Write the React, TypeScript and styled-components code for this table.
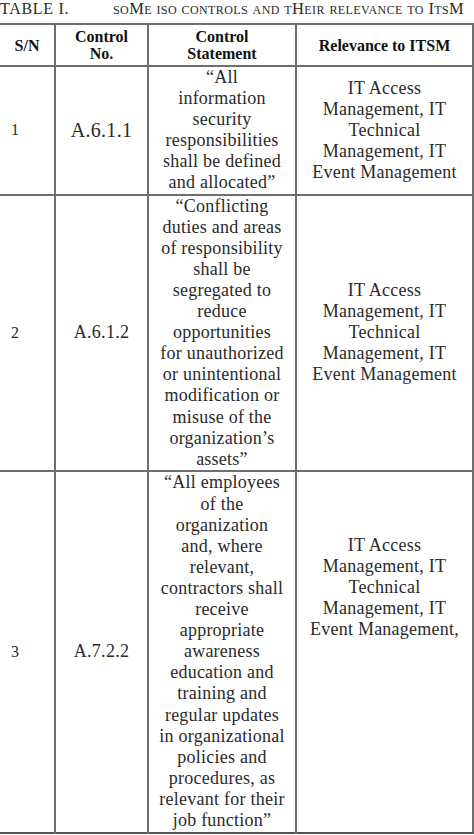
import styled, { createGlobalStyle } from 'styled-components';

const GlobalStyle = createGlobalStyle`
  html, body {
    margin: 0;
    padding: 0;
    background: #fff;
  }
  body {
    font-family: "Liberation Serif", "Times New Roman", serif;
    color: #2a2a2a;
  }
`;

type Row = {
  sn: string;
  control: string;
  controlSize: number;
  statement: string[];
  relevance: string[];
  relevancePad?: number;
  height: number;
};

const relevanceLines = ['IT Access', 'Management, IT', 'Technical', 'Management, IT', 'Event Management'];

const rows: Row[] = [
  {
    sn: '1',
    control: 'A.6.1.1',
    controlSize: 20,
    statement: ['“All', 'information', 'security', 'responsibilities', 'shall be defined', 'and allocated”'],
    relevance: relevanceLines,
    height: 127,
  },
  {
    sn: '2',
    control: 'A.6.1.2',
    controlSize: 18,
    statement: [
      '“Conflicting',
      'duties and areas',
      'of responsibility',
      'shall be',
      'segregated to',
      'reduce',
      'opportunities',
      'for unauthorized',
      'or unintentional',
      'modification or',
      'misuse of the',
      'organization’s',
      'assets”',
    ],
    relevance: relevanceLines,
    height: 275,
  },
  {
    sn: '3',
    control: 'A.7.2.2',
    controlSize: 18,
    statement: [
      '“All employees',
      'of the',
      'organization',
      'and, where',
      'relevant,',
      'contractors shall',
      'receive',
      'appropriate',
      'awareness',
      'education and',
      'training and',
      'regular updates',
      'in organizational',
      'policies and',
      'procedures, as',
      'relevant for their',
      'job function”',
    ],
    relevance: [...relevanceLines.slice(0, 4), 'Event Management,'],
    relevancePad: 128,
    height: 362,
  },
];

export default function App() {
  return (
    <>
      <GlobalStyle />
      <Page>
        <Caption>
          <CaptionLabel>TABLE I.</CaptionLabel>
          <CaptionTitle>soMe iso controls and tHeir relevance to ItsM</CaptionTitle>
        </Caption>
        <Table>
          <colgroup>
            <col style={{ width: 55 }} />
            <col style={{ width: 93 }} />
            <col style={{ width: 148 }} />
            <col />
          </colgroup>
          <thead>
            <tr>
              <HeadCell $first>S/N</HeadCell>
              <HeadCell>
                Control
                <br />
                No.
              </HeadCell>
              <HeadCell>
                Control
                <br />
                Statement
              </HeadCell>
              <HeadCell>Relevance to ITSM</HeadCell>
            </tr>
          </thead>
          <tbody>
            {rows.map(row => (
              <BodyRow key={row.sn} $height={row.height}>
                <SnCell>{row.sn}</SnCell>
                <ControlCell $size={row.controlSize}>{row.control}</ControlCell>
                <TextCell>
                  {row.statement.map((line, i) => (
                    <Line key={i}>{line}</Line>
                  ))}
                </TextCell>
                <TextCell $padBottom={row.relevancePad}>
                  {row.relevance.map((line, i) => (
                    <Line key={i}>{line}</Line>
                  ))}
                </TextCell>
              </BodyRow>
            ))}
          </tbody>
        </Table>
      </Page>
    </>
  );
}

const Page = styled.div`
  width: 474px;
  height: 835px;
  overflow: hidden;
  background: #fff;
`;

const Caption = styled.div`
  display: flex;
  align-items: baseline;
  height: 23px;
  line-height: 18px;
  color: #2a2a2a;
`;

const CaptionLabel = styled.span`
  width: 113px;
  font-size: 16px;
  letter-spacing: 0.7px;
`;

const CaptionTitle = styled.span`
  font-size: 16.5px;
  font-variant: small-caps;
  letter-spacing: 0.4px;
  white-space: nowrap;
`;

const Table = styled.table`
  width: 474px;
  table-layout: fixed;
  border-collapse: collapse;
  border-top: 2px solid #6e6e6e;
  border-bottom: 2px solid #555;
  border-right: 2px solid #6e6e6e;
`;

const HeadCell = styled.th<{ $first?: boolean }>`
  height: 40px;
  padding: 0;
  font-size: 16px;
  line-height: 17px;
  font-weight: bold;
  color: #111;
  text-align: center;
  vertical-align: middle;
  border-bottom: 2px solid #6e6e6e;
  border-left: ${({ $first }) => ($first ? 'none' : '2px solid #6e6e6e')};
`;

const BodyRow = styled.tr<{ $height: number }>`
  height: ${({ $height }) => `${$height}px`};

  td {
    border-top: 2px solid #6e6e6e;
  }
`;

const SnCell = styled.td`
  padding: 0 0 0 11px;
  font-size: 16px;
  vertical-align: middle;
  text-align: left;
`;

const ControlCell = styled.td<{ $size: number }>`
  padding: 0;
  font-size: ${({ $size }) => `${$size}px`};
  letter-spacing: 0.3px;
  text-align: center;
  vertical-align: middle;
  border-left: 2px solid #6e6e6e;
`;

const TextCell = styled.td<{ $padBottom?: number }>`
  padding: 0 0 ${({ $padBottom }) => `${$padBottom ?? 0}px`};
  font-size: 18px;
  line-height: 21.1px;
  letter-spacing: 0.25px;
  text-align: center;
  vertical-align: middle;
  border-left: 2px solid #6e6e6e;
`;

const Line = styled.div`
  white-space: nowrap;
`;
